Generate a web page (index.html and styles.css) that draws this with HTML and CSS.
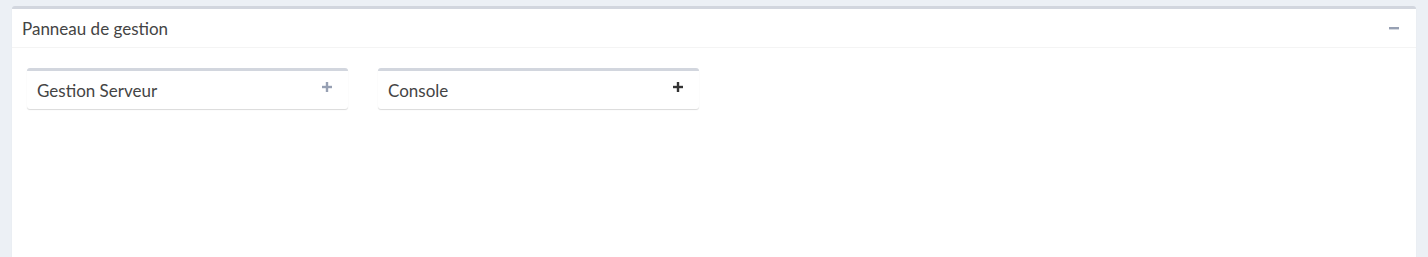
FILE: index.html
```html
<!DOCTYPE html>
<html lang="fr">
<head>
  <meta charset="UTF-8">
  <meta name="viewport" content="width=device-width, initial-scale=1.0">
  <title>Panneau de gestion</title>
  <link rel="stylesheet" href="styles.css">
</head>
<body>
  <div class="box">
    <div class="box-header">
      <h3 class="box-title">Panneau de gestion</h3>
      <button class="box-tool" title="Réduire">
        <svg width="10" height="10" viewBox="0 0 10 10"><rect x="0" y="4" width="10" height="2.4" fill="currentColor"/></svg>
      </button>
    </div>
    <div class="box-body">
      <div class="panel">
        <div class="panel-header">
          <h4 class="panel-title">Gestion Serveur</h4>
          <button class="box-tool">
            <svg width="10" height="10" viewBox="0 0 10 10"><rect x="0" y="3.8" width="10" height="2.4" fill="currentColor"/><rect x="3.8" y="0" width="2.4" height="10" fill="currentColor"/></svg>
          </button>
        </div>
      </div>
      <div class="panel">
        <div class="panel-header">
          <h4 class="panel-title">Console</h4>
          <button class="box-tool dark">
            <svg width="10" height="10" viewBox="0 0 10 10"><rect x="0" y="3.8" width="10" height="2.4" fill="currentColor"/><rect x="3.8" y="0" width="2.4" height="10" fill="currentColor"/></svg>
          </button>
        </div>
      </div>
    </div>
  </div>
</body>
</html>
```

FILE: styles.css
```css
* {
  margin: 0;
  padding: 0;
  box-sizing: border-box;
}

body {
  background: #ecf0f5;
  font-family: 'Lato', 'Liberation Sans', sans-serif;
  color: #444;
  padding: 6px 12px 0;
  height: 257px;
  overflow: hidden;
}

.box {
  background: #fff;
  border-top: 3px solid #d2d6de;
  border-radius: 3px;
  box-shadow: 0 1px 1px rgba(0, 0, 0, 0.1);
  height: 260px;
}

.box-header {
  display: flex;
  align-items: center;
  justify-content: space-between;
  height: 39px;
  padding: 0 17px 0 10px;
  border-bottom: 1px solid #f4f4f4;
}

.box-title {
  font-size: 17px;
  font-weight: 400;
  color: #444;
  line-height: 1;
}

.box-tool {
  border: none;
  background: none;
  color: #97a0b3;
  display: flex;
  cursor: pointer;
}

.box-tool.dark {
  color: #333;
}

.box-body {
  display: flex;
  gap: 30px;
  padding: 20px 15px;
}

.panel {
  width: 321px;
  background: #fff;
  border-top: 3px solid #d2d6de;
  border-radius: 3px;
  box-shadow: 0 1px 1px rgba(0, 0, 0, 0.15);
}

.panel-header {
  display: flex;
  align-items: center;
  justify-content: space-between;
  height: 38px;
  padding: 0 16px 0 10px;
}

.panel-title {
  font-size: 17px;
  font-weight: 400;
  color: #444;
  line-height: 1;
}

.panel-header .box-tool {
  margin-top: -6px;
}
```
